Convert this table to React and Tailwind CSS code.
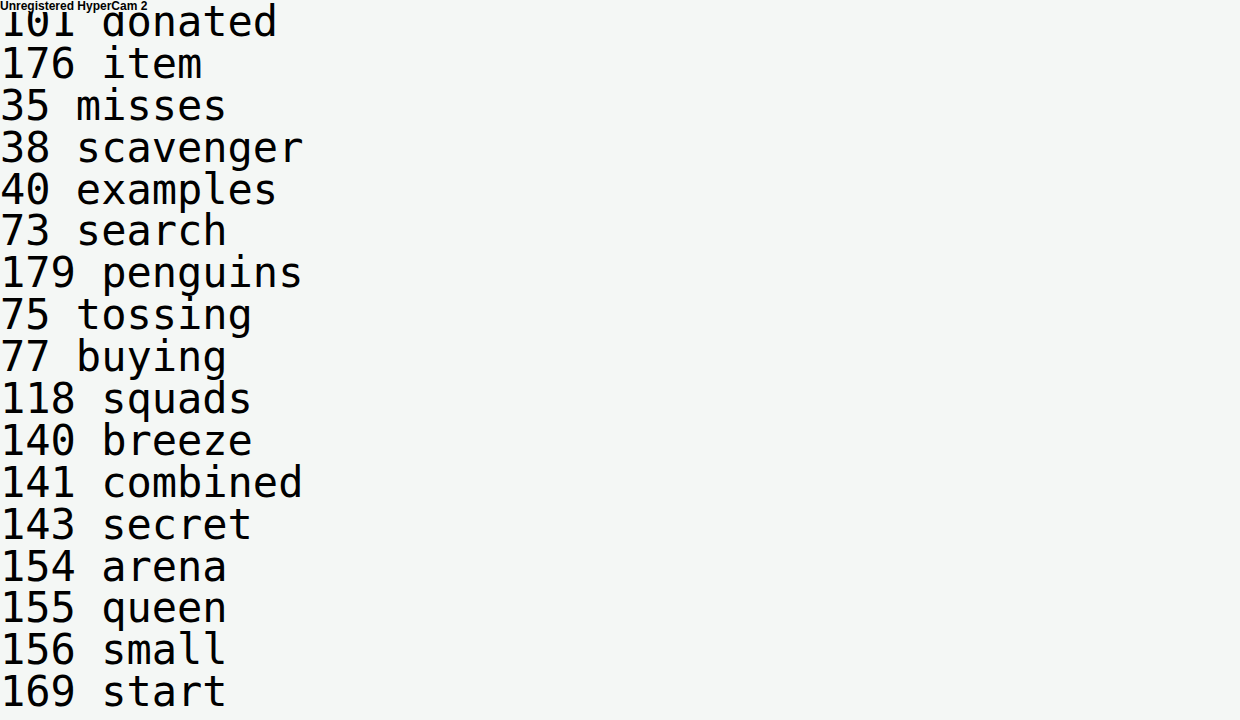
import React from 'react';

const words = [
  "101 donated",
  "176 item",
  "35 misses",
  "38 scavenger",
  "40 examples",
  "73 search",
  "179 penguins",
  "75 tossing",
  "77 buying",
  "118 squads",
  "140 breeze",
  "141 combined",
  "143 secret",
  "154 arena",
  "155 queen",
  "156 small",
  "169 start",
];

const App = () => {
  return (
    <div className="relative w-[1240px] h-[720px] overflow-hidden bg-[#f4f7f5]">
      <div className="flex flex-col pt-[1px] text-[42px] leading-[41.9px] text-black font-['DejaVu_Sans_Mono',monospace] whitespace-pre">
        {words.map((w) => (
          <div key={w} className="h-[41.9px]">{w}</div>
        ))}
      </div>
      {/* recorder watermark sits over the first line */}
      <div className="absolute left-0 top-0 h-[12px] pr-[2px] bg-[#f4f7f5] text-[12px] leading-[12px] font-bold text-black font-['Liberation_Sans',Arial,sans-serif]">
        Unregistered HyperCam 2
      </div>
    </div>
  );
};

export default App;
